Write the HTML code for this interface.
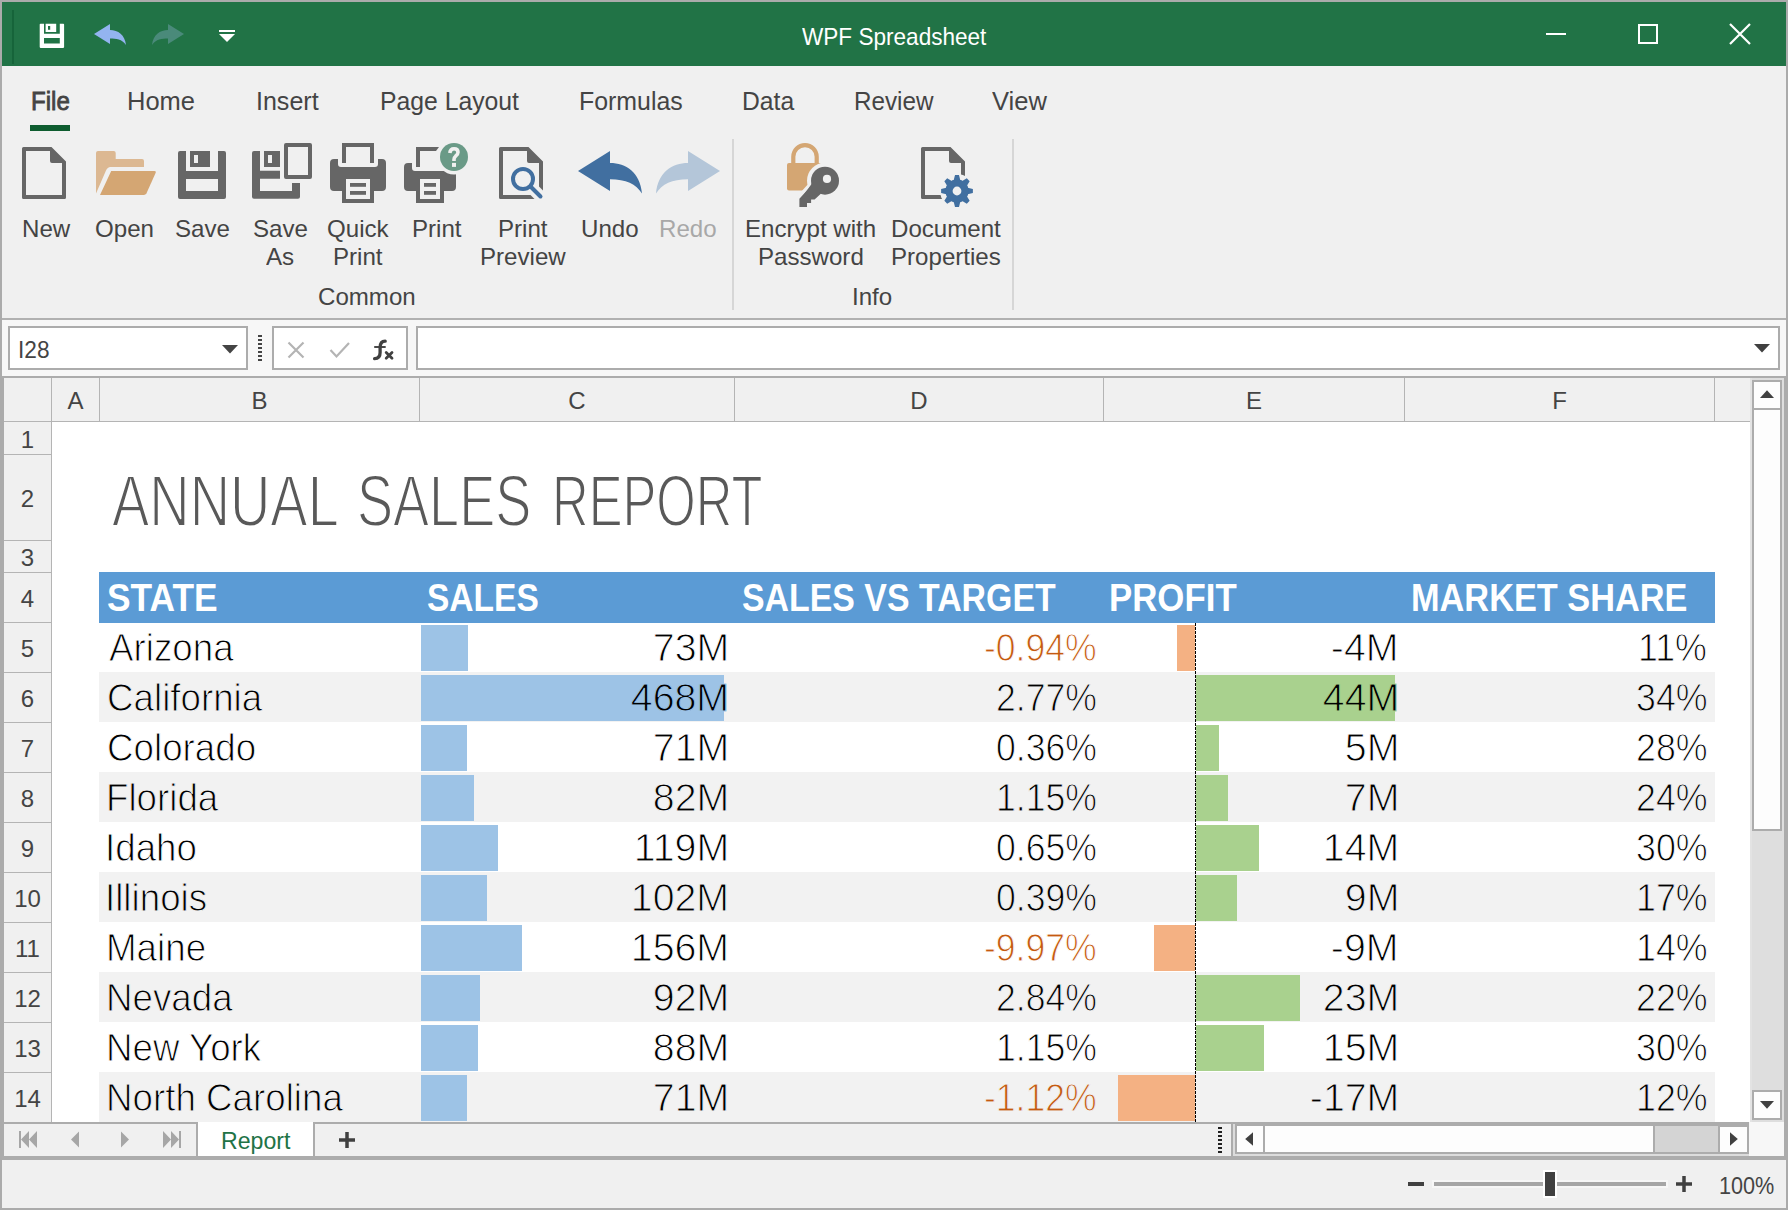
<!DOCTYPE html>
<html><head><meta charset="utf-8"><style>
*{margin:0;padding:0;box-sizing:border-box}
html,body{width:1788px;height:1210px;overflow:hidden}
body{position:relative;background:#ababab;font-family:"Liberation Sans",sans-serif;color:#444}
div,svg{position:absolute}
.t{white-space:nowrap;line-height:1}
</style></head><body>
<div style="left:2px;top:2px;width:1784px;height:64px;background:#217346"></div>
<div style="left:12px;top:10px;width:2px;height:54px;background:#16643a"></div>
<svg style="left:36px;top:20px" width="32" height="32" viewBox="36 20 32 32">
<path fill="#fff" fill-rule="evenodd" d="M40.5 23.8H44V33.7H59.8V23.8H63.3Q64.1 23.8 64.1 24.6V47.1Q64.1 47.9 63.3 47.9H40.5Q39.7 47.9 39.7 47.1V24.6Q39.7 23.8 40.5 23.8Z M44 38H59.8V43.6H44Z"/>
<path fill="#fff" fill-rule="evenodd" d="M45.6 23.8H56.2V32H45.6Z M48 26.1H50.2V29.8H48Z"/>
</svg>
<svg style="left:90px;top:20px" width="40" height="30" viewBox="0 0 40 30">
<path fill="#93b4f0" d="M4 14 L20 4 V10 C28 10 35 15 36 25 C32 19 26 18.5 20 18.5 V24 Z"/>
</svg>
<svg style="left:148px;top:20px" width="40" height="30" viewBox="0 0 40 30">
<path fill="#4a8a7a" d="M36 14 L20 4 V10 C12 10 5 15 4 25 C8 19 14 18.5 20 18.5 V24 Z"/>
</svg>
<div style="left:219px;top:30px;width:16px;height:2px;background:#fff"></div>
<svg style="left:219px;top:34px" width="16" height="9" viewBox="0 0 16 9"><path fill="#fff" d="M0 0H16L8 8Z"/></svg>
<div class="t" style="left:802.30px;top:25px;font-size:24.6px;color:#fff;transform-origin:0 0;transform:scaleX(0.9176);">WPF Spreadsheet</div>
<div style="left:1546px;top:33px;width:20px;height:2px;background:#fff"></div>
<div style="left:1638px;top:24px;width:20px;height:20px;border:2px solid #fff"></div>
<svg style="left:1728px;top:22px" width="24" height="24" viewBox="0 0 24 24"><path stroke="#fff" stroke-width="2.2" d="M2 2L22 22M22 2L2 22"/></svg>
<div style="left:2px;top:66px;width:1784px;height:252px;background:#f0f0f0"></div>
<div class="t" style="left:31.20px;top:89px;font-size:25.4px;color:#444;transform-origin:0 0;transform:scaleX(0.9481);-webkit-text-stroke:0.8px #444;">File</div>
<div class="t" style="left:127.00px;top:89px;font-size:25.4px;color:#444;transform-origin:0 0;transform:scaleX(1.0039);">Home</div>
<div class="t" style="left:256.20px;top:89px;font-size:25.4px;color:#444;transform-origin:0 0;transform:scaleX(0.9856);">Insert</div>
<div class="t" style="left:379.60px;top:89px;font-size:25.4px;color:#444;transform-origin:0 0;transform:scaleX(0.9748);">Page Layout</div>
<div class="t" style="left:579.30px;top:89px;font-size:25.4px;color:#444;transform-origin:0 0;transform:scaleX(0.9799);">Formulas</div>
<div class="t" style="left:741.70px;top:89px;font-size:25.4px;color:#444;transform-origin:0 0;transform:scaleX(0.9713);">Data</div>
<div class="t" style="left:854.10px;top:89px;font-size:25.4px;color:#444;transform-origin:0 0;transform:scaleX(0.9548);">Review</div>
<div class="t" style="left:992.30px;top:89px;font-size:25.4px;color:#444;transform-origin:0 0;transform:scaleX(1.0059);">View</div>
<div style="left:30px;top:125px;width:40px;height:5.6px;background:#0e5c2f"></div>
<div class="t" style="left:21.90px;top:218px;font-size:23.4px;color:#444;transform-origin:0 0;transform:scaleX(1.0300);">New</div>
<div class="t" style="left:94.52px;top:218px;font-size:23.4px;color:#444;transform-origin:0 0;transform:scaleX(1.0300);">Open</div>
<div class="t" style="left:174.54px;top:218px;font-size:23.4px;color:#444;transform-origin:0 0;transform:scaleX(1.0300);">Save</div>
<div class="t" style="left:252.54px;top:218px;font-size:23.4px;color:#444;transform-origin:0 0;transform:scaleX(1.0300);">Save</div>
<div class="t" style="left:265.94px;top:246px;font-size:23.4px;color:#444;transform-origin:0 0;transform:scaleX(1.0300);">As</div>
<div class="t" style="left:327.20px;top:218px;font-size:23.4px;color:#444;transform-origin:0 0;transform:scaleX(1.0300);">Quick</div>
<div class="t" style="left:333.22px;top:246px;font-size:23.4px;color:#444;transform-origin:0 0;transform:scaleX(1.0300);">Print</div>
<div class="t" style="left:412.22px;top:218px;font-size:23.4px;color:#444;transform-origin:0 0;transform:scaleX(1.0300);">Print</div>
<div class="t" style="left:498.22px;top:218px;font-size:23.4px;color:#444;transform-origin:0 0;transform:scaleX(1.0300);">Print</div>
<div class="t" style="left:480.15px;top:246px;font-size:23.4px;color:#444;transform-origin:0 0;transform:scaleX(1.0300);">Preview</div>
<div class="t" style="left:581.20px;top:218px;font-size:23.4px;color:#444;transform-origin:0 0;transform:scaleX(1.0300);">Undo</div>
<div class="t" style="left:659.20px;top:218px;font-size:23.4px;color:#a8a8a8;transform-origin:0 0;transform:scaleX(1.0300);">Redo</div>
<div class="t" style="left:745.39px;top:218px;font-size:23.4px;color:#444;transform-origin:0 0;transform:scaleX(1.0300);">Encrypt with</div>
<div class="t" style="left:758.11px;top:246px;font-size:23.4px;color:#444;transform-origin:0 0;transform:scaleX(1.0300);">Password</div>
<div class="t" style="left:890.60px;top:218px;font-size:23.4px;color:#444;transform-origin:0 0;transform:scaleX(1.0300);">Document</div>
<div class="t" style="left:890.60px;top:246px;font-size:23.4px;color:#444;transform-origin:0 0;transform:scaleX(1.0300);">Properties</div>
<div class="t" style="left:318.13px;top:286px;font-size:23.4px;color:#444;transform-origin:0 0;transform:scaleX(1.0300);">Common</div>
<div class="t" style="left:851.91px;top:286px;font-size:23.4px;color:#444;transform-origin:0 0;transform:scaleX(1.0300);">Info</div>
<div style="left:732px;top:139px;width:2px;height:171px;background:#d6d6d6"></div>
<div style="left:1012px;top:139px;width:2px;height:171px;background:#d6d6d6"></div>
<svg style="left:22px;top:147px" width="44" height="52" viewBox="0 0 44 52"><path fill="#666666" fill-rule="evenodd" d="M1.5 0H29.5L44 14.5V50.5Q44 52 42.5 52H1.5Q0 52 0 50.5V1.5Q0 0 1.5 0ZM4 4H28V14Q28 16 30 16H40V48H4Z"/></svg>
<svg style="left:96px;top:151px" width="61" height="45" viewBox="0 0 61 45"><path fill="#dcb892" d="M0 2Q0 0 2 0H17.7Q19.7 0 19.7 2V8H46Q48 8 48 10V16H14.5Q11.5 16 10 19.5L0 42.5Z"/><path fill="#d4a673" d="M15.2 20H58.5Q60.5 20 59.7 21.8L50.5 42.3Q49.6 44 47.8 44H4Z"/></svg>
<svg style="left:178px;top:151px" width="48" height="48" viewBox="0 0 48 48"><path fill="#666666" fill-rule="evenodd" d="M2 0H8V20H40V0H46Q48 0 48 2V46Q48 48 46 48H2Q0 48 0 46V2Q0 0 2 0Z M8 28H40V40H8Z"/><path fill="#666666" fill-rule="evenodd" d="M12 0H32V16H12Z M16 4H20V12H16Z"/></svg>
<svg style="left:252px;top:143px" width="61" height="57" viewBox="0 0 61 57"><path fill="#666666" fill-rule="evenodd" d="M2 8H8V27.8H28V35.8H8V48H40V40H48V53.8Q48 55.8 46 55.8H2Q0 55.8 0 53.8V10Q0 8 2 8Z"/><path fill="#666666" fill-rule="evenodd" d="M12 8H28V24H12Z M16 12H20V20H16Z"/><path fill="#666666" fill-rule="evenodd" d="M34 0H58Q60 0 60 2V34Q60 36 58 36H34Q32 36 32 34V2Q32 0 34 0Z M36 4V32H56V4Z"/></svg>
<svg style="left:330px;top:143px" width="56" height="60" viewBox="0 0 56 60"><path fill="#666666" d="M12 0H44V20H40V4H16V20H12Z"/><path fill="#666666" fill-rule="evenodd" d="M0 20Q0 16 4 16H8V21Q8 24 11 24H45Q48 24 48 21V16H52Q56 16 56 20V44Q56 48 52 48H44V60H12V48H4Q0 48 0 44Z M16 36V56H40V36Z"/><rect fill="#666666" x="20" y="40" width="16" height="3.8"/><rect fill="#666666" x="20" y="48" width="16" height="3.8"/></svg>
<svg style="left:404px;top:140px" width="66" height="64" viewBox="0 0 66 64"><g transform="translate(0,3)"><path fill="#666666" d="M12 4H35L32 8H16V24H12Z"/><path fill="#666666" fill-rule="evenodd" d="M0 24Q0 20 4 20H8V25Q8 28 11 28H52V44Q52 48 48 48H40V60H12V48H4Q0 48 0 44Z M16 36V56H36V36Z"/><rect fill="#666666" x="20" y="40" width="12" height="3.8"/><rect fill="#666666" x="20" y="48" width="12" height="3.8"/><circle cx="50" cy="14" r="17.5" fill="#f0f0f0"/><circle cx="50" cy="14" r="14" fill="#6a9a87"/><path fill="none" stroke="#f0f0f0" stroke-width="3.6" d="M45.8 10Q46.3 5.8 50 5.8Q54 5.8 54 9.3Q54 11.5 51.5 13.3Q50 14.5 50 16.5V17.9"/><rect fill="#f0f0f0" x="48" y="19.9" width="4" height="4"/></g></svg>
<svg style="left:499px;top:147px" width="46" height="54" viewBox="0 0 46 54"><path fill="#666666" fill-rule="evenodd" d="M1.5 0H29.5L44 14.5V50.5Q44 52 42.5 52H1.5Q0 52 0 50.5V1.5Q0 0 1.5 0ZM4 4H28V14Q28 16 30 16H40V48H4Z"/><circle cx="24" cy="32" r="10" fill="none" stroke="#f0f0f0" stroke-width="11"/><path stroke="#f0f0f0" stroke-width="12" d="M31 39L46 54"/><circle cx="24" cy="32" r="10" fill="none" stroke="#416fa0" stroke-width="4"/><path stroke="#416fa0" stroke-width="4" stroke-linecap="round" d="M31.5 39.5L41.5 49.5"/></svg>
<svg style="left:578px;top:150px" width="66" height="46" viewBox="0 0 66 46"><path fill="#416fa0" d="M0 21L32 1V13C48 13 62 22 64 43.5C58 34 48 29.2 32 29.2V41Z"/></svg>
<svg style="left:655px;top:150px" width="66" height="46" viewBox="0 0 66 46"><path fill="#b4c6d9" d="M65 21L33 1V13C17 13 3 22 1 43.5C7 34 17 29.2 33 29.2V41Z"/></svg>
<svg style="left:785px;top:141px" width="40" height="52" viewBox="0 0 40 52"><g transform="translate(2,2)"><path fill="none" stroke="#d4a673" stroke-width="4.2" d="M6.3 20V13.8A11.7 11.7 0 0 1 29.7 13.8V20"/><rect fill="#d4a673" x="0" y="20" width="34" height="27.6" rx="2"/></g></svg>
<svg style="left:780px;top:160px" width="60" height="52" viewBox="780 160 60 52"><circle cx="825" cy="180.7" r="18" fill="#f0f0f0"/><path fill="#f0f0f0" stroke="#f0f0f0" stroke-width="7" stroke-linejoin="round" d="M811.7 185.3L799.4 198.8V207.1H807V203H811.1V199.4H814.6L821.1 193.6Z"/><circle cx="825" cy="180.7" r="14" fill="#666666"/><path fill="#666666" d="M811.7 185.3L799.4 198.8V207.1H807V203H811.1V199.4H814.6L821.1 193.6Z"/><path fill="#666666" d="M813 182L822 191L800 200Z"/><circle cx="827" cy="178.9" r="4.1" fill="#f0f0f0"/></svg>
<svg style="left:921px;top:147px" width="56" height="62" viewBox="0 0 56 62"><path fill="#666666" fill-rule="evenodd" d="M1.5 0H29.5L44 14.5V50.5Q44 52 42.5 52H1.5Q0 52 0 50.5V1.5Q0 0 1.5 0ZM4 4H28V14Q28 16 30 16H40V48H4Z"/><circle cx="36" cy="44" r="17" fill="#f0f0f0"/><path fill="#416fa0" d="M32.69 33.30 L34.01 28.12 L37.99 28.12 L39.31 33.30 L41.23 34.09 L45.81 31.36 L48.64 34.19 L45.91 38.77 L46.70 40.69 L51.88 42.01 L51.88 45.99 L46.70 47.31 L45.91 49.23 L48.64 53.81 L45.81 56.64 L41.23 53.91 L39.31 54.70 L37.99 59.88 L34.01 59.88 L32.69 54.70 L30.77 53.91 L26.19 56.64 L23.36 53.81 L26.09 49.23 L25.30 47.31 L20.12 45.99 L20.12 42.01 L25.30 40.69 L26.09 38.77 L23.36 34.19 L26.19 31.36 L30.77 34.09Z"/><circle cx="36" cy="44" r="11.6" fill="#416fa0"/><circle cx="36" cy="44" r="4.4" fill="#f0f0f0"/></svg>
<div style="left:2px;top:318px;width:1784px;height:2px;background:#b1b1b1"></div>
<div style="left:2px;top:320px;width:1784px;height:56px;background:#f7f7f7"></div>
<div style="left:8px;top:326px;width:240px;height:44px;background:#fff;border:2px solid #acacac"></div>
<div class="t" style="left:18.00px;top:338px;font-size:24px;color:#444;transform-origin:0 0;transform:scaleX(0.9438);">I28</div>
<svg style="left:222px;top:345px" width="16" height="9" viewBox="0 0 16 9"><path fill="#444" d="M0 0H16L8 8.5Z"/></svg>
<div style="left:258px;top:335px;width:4px;height:2.2px;background:#444"></div>
<div style="left:258px;top:339px;width:4px;height:2.2px;background:#444"></div>
<div style="left:258px;top:343px;width:4px;height:2.2px;background:#444"></div>
<div style="left:258px;top:347px;width:4px;height:2.2px;background:#444"></div>
<div style="left:258px;top:351px;width:4px;height:2.2px;background:#444"></div>
<div style="left:258px;top:355px;width:4px;height:2.2px;background:#444"></div>
<div style="left:258px;top:359px;width:4px;height:2.2px;background:#444"></div>
<div style="left:272px;top:326px;width:136px;height:44px;background:#fff;border:2px solid #acacac"></div>
<svg style="left:286px;top:340px" width="20" height="20" viewBox="0 0 20 20"><path stroke="#b4b4b4" stroke-width="2.2" d="M2.5 2.5L17.5 17.5M17.5 2.5L2.5 17.5"/></svg>
<svg style="left:328px;top:340px" width="24" height="20" viewBox="0 0 24 20"><path stroke="#b4b4b4" stroke-width="2.2" fill="none" d="M2.5 10L8.5 16.5L21 3"/></svg>
<svg style="left:366px;top:334px" width="36" height="32" viewBox="366 334 36 32">
<path fill="none" stroke="#404040" stroke-width="3.3" stroke-linecap="round" d="M385.2 341.2C381.2 341.3 380.1 343.5 380.1 347.5V352.5C380.1 356.8 378.2 358.6 374.6 358.7"/>
<path stroke="#404040" stroke-width="1.9" d="M374.2 347H385.7"/>
<path stroke="#404040" stroke-width="2.8" stroke-linecap="round" d="M386.2 352.4L392 358.2M392 352.4L386.2 358.2"/>
</svg>
<div style="left:416px;top:326px;width:1364px;height:44px;background:#fff;border:2px solid #acacac"></div>
<svg style="left:1754px;top:344px" width="17" height="10" viewBox="0 0 17 10"><path fill="#404040" d="M0 0H16L8 8.6Z"/></svg>
<div style="left:2px;top:376px;width:1784px;height:2px;background:#acacac"></div>
<div style="left:4px;top:378px;width:1746px;height:744px;background:#fff"></div>
<div style="left:4px;top:378px;width:1746px;height:43px;background:#f0f0f0"></div>
<div style="left:4px;top:421px;width:1746px;height:1px;background:#b4b4b4"></div>
<div style="left:51px;top:378px;width:1px;height:43px;background:#b4b4b4"></div>
<div style="left:99px;top:378px;width:1px;height:43px;background:#b4b4b4"></div>
<div style="left:419px;top:378px;width:1px;height:43px;background:#b4b4b4"></div>
<div style="left:734px;top:378px;width:1px;height:43px;background:#b4b4b4"></div>
<div style="left:1103px;top:378px;width:1px;height:43px;background:#b4b4b4"></div>
<div style="left:1404px;top:378px;width:1px;height:43px;background:#b4b4b4"></div>
<div style="left:1714px;top:378px;width:1px;height:43px;background:#b4b4b4"></div>
<div class="t" style="left:67.49px;top:389px;font-size:24px;color:#444;">A</div>
<div class="t" style="left:251.49px;top:389px;font-size:24px;color:#444;">B</div>
<div class="t" style="left:568.33px;top:389px;font-size:24px;color:#444;">C</div>
<div class="t" style="left:910.33px;top:389px;font-size:24px;color:#444;">D</div>
<div class="t" style="left:1245.99px;top:389px;font-size:24px;color:#444;">E</div>
<div class="t" style="left:1552.16px;top:389px;font-size:24px;color:#444;">F</div>
<div style="left:4px;top:422px;width:47px;height:700px;background:#f0f0f0"></div>
<div style="left:51px;top:422px;width:1px;height:700px;background:#b4b4b4"></div>
<div style="left:4px;top:454px;width:47px;height:1px;background:#b4b4b4"></div>
<div class="t" style="left:20.82px;top:428px;font-size:24px;color:#444;">1</div>
<div style="left:4px;top:540px;width:47px;height:1px;background:#b4b4b4"></div>
<div class="t" style="left:20.82px;top:487px;font-size:24px;color:#444;">2</div>
<div style="left:4px;top:572px;width:47px;height:1px;background:#b4b4b4"></div>
<div class="t" style="left:20.82px;top:546px;font-size:24px;color:#444;">3</div>
<div style="left:4px;top:622px;width:47px;height:1px;background:#b4b4b4"></div>
<div class="t" style="left:20.82px;top:587px;font-size:24px;color:#444;">4</div>
<div style="left:4px;top:672px;width:47px;height:1px;background:#b4b4b4"></div>
<div class="t" style="left:20.82px;top:637px;font-size:24px;color:#444;">5</div>
<div style="left:4px;top:722px;width:47px;height:1px;background:#b4b4b4"></div>
<div class="t" style="left:20.82px;top:687px;font-size:24px;color:#444;">6</div>
<div style="left:4px;top:772px;width:47px;height:1px;background:#b4b4b4"></div>
<div class="t" style="left:20.82px;top:737px;font-size:24px;color:#444;">7</div>
<div style="left:4px;top:822px;width:47px;height:1px;background:#b4b4b4"></div>
<div class="t" style="left:20.82px;top:787px;font-size:24px;color:#444;">8</div>
<div style="left:4px;top:872px;width:47px;height:1px;background:#b4b4b4"></div>
<div class="t" style="left:20.82px;top:837px;font-size:24px;color:#444;">9</div>
<div style="left:4px;top:922px;width:47px;height:1px;background:#b4b4b4"></div>
<div class="t" style="left:14.15px;top:887px;font-size:24px;color:#444;">10</div>
<div style="left:4px;top:972px;width:47px;height:1px;background:#b4b4b4"></div>
<div class="t" style="left:15.04px;top:937px;font-size:24px;color:#444;">11</div>
<div style="left:4px;top:1022px;width:47px;height:1px;background:#b4b4b4"></div>
<div class="t" style="left:14.15px;top:987px;font-size:24px;color:#444;">12</div>
<div style="left:4px;top:1072px;width:47px;height:1px;background:#b4b4b4"></div>
<div class="t" style="left:14.15px;top:1037px;font-size:24px;color:#444;">13</div>
<div style="left:4px;top:1122px;width:47px;height:1px;background:#b4b4b4"></div>
<div class="t" style="left:14.15px;top:1087px;font-size:24px;color:#444;">14</div>
<div class="t" style="left:112.10px;top:465px;font-size:72px;color:#595959;transform-origin:0 0;transform:scaleX(0.7762);-webkit-text-stroke:1.8px #fff;">ANNUAL</div>
<div class="t" style="left:356.55px;top:465px;font-size:72px;color:#595959;transform-origin:0 0;transform:scaleX(0.7509);-webkit-text-stroke:1.8px #fff;">SALES</div>
<div class="t" style="left:552.27px;top:465px;font-size:72px;color:#595959;transform-origin:0 0;transform:scaleX(0.7048);-webkit-text-stroke:1.8px #fff;">REPORT</div>
<div style="left:99px;top:572px;width:1616px;height:51px;background:#5b9bd5"></div>
<div class="t" style="left:107.09px;top:578px;font-size:39px;color:#fff;font-weight:bold;transform-origin:0 0;transform:scaleX(0.9067);">STATE</div>
<div class="t" style="left:427.14px;top:578px;font-size:39px;color:#fff;font-weight:bold;transform-origin:0 0;transform:scaleX(0.8594);">SALES</div>
<div class="t" style="left:742.43px;top:578px;font-size:39px;color:#fff;font-weight:bold;transform-origin:0 0;transform:scaleX(0.8686);">SALES VS TARGET</div>
<div class="t" style="left:1109.32px;top:578px;font-size:39px;color:#fff;font-weight:bold;transform-origin:0 0;transform:scaleX(0.8929);">PROFIT</div>
<div class="t" style="left:1411.16px;top:578px;font-size:39px;color:#fff;font-weight:bold;transform-origin:0 0;transform:scaleX(0.8797);">MARKET SHARE</div>
<div style="left:421px;top:625px;width:47px;height:46px;background:#9dc3e6"></div>
<div style="left:1177px;top:625px;width:18px;height:46px;background:#f4b183"></div>
<div class="t" style="left:109.00px;top:628px;font-size:39.3px;color:#000;transform-origin:0 0;transform:scaleX(0.9350);-webkit-text-stroke:1px #fff;">Arizona</div>
<div class="t" style="left:652.80px;top:628px;font-size:39.3px;color:#000;-webkit-text-stroke:1px #fff;">73M</div>
<div class="t" style="left:984.18px;top:628px;font-size:39.3px;color:#c55a11;transform-origin:0 0;transform:scaleX(0.9050);-webkit-text-stroke:1px #fff;">-0.94%</div>
<div class="t" style="left:1330.80px;top:628px;font-size:39.3px;color:#000;-webkit-text-stroke:1px #fff;">-4M</div>
<div class="t" style="left:1638.25px;top:628px;font-size:39.3px;color:#000;transform-origin:0 0;transform:scaleX(0.9100);-webkit-text-stroke:1px #fff;">11%</div>
<div style="left:99px;top:672px;width:1616px;height:50px;background:#f2f2f2"></div>
<div style="left:421px;top:675px;width:303px;height:46px;background:#9dc3e6"></div>
<div style="left:1196px;top:675px;width:199px;height:46px;background:#a9d18e"></div>
<div class="t" style="left:107.13px;top:678px;font-size:39.3px;color:#000;transform-origin:0 0;transform:scaleX(0.9350);-webkit-text-stroke:1px #f2f2f2;">California</div>
<div class="t" style="left:630.80px;top:678px;font-size:39.3px;color:#000;-webkit-text-stroke:1px #9dc3e6;">468M</div>
<div class="t" style="left:995.95px;top:678px;font-size:39.3px;color:#000;transform-origin:0 0;transform:scaleX(0.9050);-webkit-text-stroke:1px #f2f2f2;">2.77%</div>
<div class="t" style="left:1322.80px;top:678px;font-size:39.3px;color:#000;-webkit-text-stroke:1px #a9d18e;">44M</div>
<div class="t" style="left:1635.52px;top:678px;font-size:39.3px;color:#000;transform-origin:0 0;transform:scaleX(0.9100);-webkit-text-stroke:1px #f2f2f2;">34%</div>
<div style="left:421px;top:725px;width:46px;height:46px;background:#9dc3e6"></div>
<div style="left:1196px;top:725px;width:23px;height:46px;background:#a9d18e"></div>
<div class="t" style="left:107.13px;top:728px;font-size:39.3px;color:#000;transform-origin:0 0;transform:scaleX(0.9350);-webkit-text-stroke:1px #fff;">Colorado</div>
<div class="t" style="left:652.80px;top:728px;font-size:39.3px;color:#000;-webkit-text-stroke:1px #fff;">71M</div>
<div class="t" style="left:995.95px;top:728px;font-size:39.3px;color:#000;transform-origin:0 0;transform:scaleX(0.9050);-webkit-text-stroke:1px #fff;">0.36%</div>
<div class="t" style="left:1344.80px;top:728px;font-size:39.3px;color:#000;-webkit-text-stroke:1px #fff;">5M</div>
<div class="t" style="left:1635.52px;top:728px;font-size:39.3px;color:#000;transform-origin:0 0;transform:scaleX(0.9100);-webkit-text-stroke:1px #fff;">28%</div>
<div style="left:99px;top:772px;width:1616px;height:50px;background:#f2f2f2"></div>
<div style="left:421px;top:775px;width:53px;height:46px;background:#9dc3e6"></div>
<div style="left:1196px;top:775px;width:32px;height:46px;background:#a9d18e"></div>
<div class="t" style="left:106.19px;top:778px;font-size:39.3px;color:#000;transform-origin:0 0;transform:scaleX(0.9350);-webkit-text-stroke:1px #f2f2f2;">Florida</div>
<div class="t" style="left:652.80px;top:778px;font-size:39.3px;color:#000;-webkit-text-stroke:1px #f2f2f2;">82M</div>
<div class="t" style="left:995.95px;top:778px;font-size:39.3px;color:#000;transform-origin:0 0;transform:scaleX(0.9050);-webkit-text-stroke:1px #f2f2f2;">1.15%</div>
<div class="t" style="left:1344.80px;top:778px;font-size:39.3px;color:#000;-webkit-text-stroke:1px #f2f2f2;">7M</div>
<div class="t" style="left:1635.52px;top:778px;font-size:39.3px;color:#000;transform-origin:0 0;transform:scaleX(0.9100);-webkit-text-stroke:1px #f2f2f2;">24%</div>
<div style="left:421px;top:825px;width:77px;height:46px;background:#9dc3e6"></div>
<div style="left:1196px;top:825px;width:63px;height:46px;background:#a9d18e"></div>
<div class="t" style="left:105.26px;top:828px;font-size:39.3px;color:#000;transform-origin:0 0;transform:scaleX(0.9350);-webkit-text-stroke:1px #fff;">Idaho</div>
<div class="t" style="left:633.80px;top:828px;font-size:39.3px;color:#000;-webkit-text-stroke:1px #fff;">119M</div>
<div class="t" style="left:995.95px;top:828px;font-size:39.3px;color:#000;transform-origin:0 0;transform:scaleX(0.9050);-webkit-text-stroke:1px #fff;">0.65%</div>
<div class="t" style="left:1322.80px;top:828px;font-size:39.3px;color:#000;-webkit-text-stroke:1px #fff;">14M</div>
<div class="t" style="left:1635.52px;top:828px;font-size:39.3px;color:#000;transform-origin:0 0;transform:scaleX(0.9100);-webkit-text-stroke:1px #fff;">30%</div>
<div style="left:99px;top:872px;width:1616px;height:50px;background:#f2f2f2"></div>
<div style="left:421px;top:875px;width:66px;height:46px;background:#9dc3e6"></div>
<div style="left:1196px;top:875px;width:41px;height:46px;background:#a9d18e"></div>
<div class="t" style="left:105.26px;top:878px;font-size:39.3px;color:#000;transform-origin:0 0;transform:scaleX(0.9350);-webkit-text-stroke:1px #f2f2f2;">Illinois</div>
<div class="t" style="left:630.80px;top:878px;font-size:39.3px;color:#000;-webkit-text-stroke:1px #f2f2f2;">102M</div>
<div class="t" style="left:995.95px;top:878px;font-size:39.3px;color:#000;transform-origin:0 0;transform:scaleX(0.9050);-webkit-text-stroke:1px #f2f2f2;">0.39%</div>
<div class="t" style="left:1344.80px;top:878px;font-size:39.3px;color:#000;-webkit-text-stroke:1px #f2f2f2;">9M</div>
<div class="t" style="left:1635.52px;top:878px;font-size:39.3px;color:#000;transform-origin:0 0;transform:scaleX(0.9100);-webkit-text-stroke:1px #f2f2f2;">17%</div>
<div style="left:421px;top:925px;width:101px;height:46px;background:#9dc3e6"></div>
<div style="left:1154px;top:925px;width:41px;height:46px;background:#f4b183"></div>
<div class="t" style="left:106.19px;top:928px;font-size:39.3px;color:#000;transform-origin:0 0;transform:scaleX(0.9350);-webkit-text-stroke:1px #fff;">Maine</div>
<div class="t" style="left:630.80px;top:928px;font-size:39.3px;color:#000;-webkit-text-stroke:1px #fff;">156M</div>
<div class="t" style="left:984.18px;top:928px;font-size:39.3px;color:#c55a11;transform-origin:0 0;transform:scaleX(0.9050);-webkit-text-stroke:1px #fff;">-9.97%</div>
<div class="t" style="left:1330.80px;top:928px;font-size:39.3px;color:#000;-webkit-text-stroke:1px #fff;">-9M</div>
<div class="t" style="left:1635.52px;top:928px;font-size:39.3px;color:#000;transform-origin:0 0;transform:scaleX(0.9100);-webkit-text-stroke:1px #fff;">14%</div>
<div style="left:99px;top:972px;width:1616px;height:50px;background:#f2f2f2"></div>
<div style="left:421px;top:975px;width:59px;height:46px;background:#9dc3e6"></div>
<div style="left:1196px;top:975px;width:104px;height:46px;background:#a9d18e"></div>
<div class="t" style="left:106.19px;top:978px;font-size:39.3px;color:#000;transform-origin:0 0;transform:scaleX(0.9350);-webkit-text-stroke:1px #f2f2f2;">Nevada</div>
<div class="t" style="left:652.80px;top:978px;font-size:39.3px;color:#000;-webkit-text-stroke:1px #f2f2f2;">92M</div>
<div class="t" style="left:995.95px;top:978px;font-size:39.3px;color:#000;transform-origin:0 0;transform:scaleX(0.9050);-webkit-text-stroke:1px #f2f2f2;">2.84%</div>
<div class="t" style="left:1322.80px;top:978px;font-size:39.3px;color:#000;-webkit-text-stroke:1px #f2f2f2;">23M</div>
<div class="t" style="left:1635.52px;top:978px;font-size:39.3px;color:#000;transform-origin:0 0;transform:scaleX(0.9100);-webkit-text-stroke:1px #f2f2f2;">22%</div>
<div style="left:421px;top:1025px;width:57px;height:46px;background:#9dc3e6"></div>
<div style="left:1196px;top:1025px;width:68px;height:46px;background:#a9d18e"></div>
<div class="t" style="left:106.19px;top:1028px;font-size:39.3px;color:#000;transform-origin:0 0;transform:scaleX(0.9350);-webkit-text-stroke:1px #fff;">New York</div>
<div class="t" style="left:652.80px;top:1028px;font-size:39.3px;color:#000;-webkit-text-stroke:1px #fff;">88M</div>
<div class="t" style="left:995.95px;top:1028px;font-size:39.3px;color:#000;transform-origin:0 0;transform:scaleX(0.9050);-webkit-text-stroke:1px #fff;">1.15%</div>
<div class="t" style="left:1322.80px;top:1028px;font-size:39.3px;color:#000;-webkit-text-stroke:1px #fff;">15M</div>
<div class="t" style="left:1635.52px;top:1028px;font-size:39.3px;color:#000;transform-origin:0 0;transform:scaleX(0.9100);-webkit-text-stroke:1px #fff;">30%</div>
<div style="left:99px;top:1072px;width:1616px;height:50px;background:#f2f2f2"></div>
<div style="left:421px;top:1075px;width:46px;height:46px;background:#9dc3e6"></div>
<div style="left:1118px;top:1075px;width:77px;height:46px;background:#f4b183"></div>
<div class="t" style="left:106.19px;top:1078px;font-size:39.3px;color:#000;transform-origin:0 0;transform:scaleX(0.9350);-webkit-text-stroke:1px #f2f2f2;">North Carolina</div>
<div class="t" style="left:652.80px;top:1078px;font-size:39.3px;color:#000;-webkit-text-stroke:1px #f2f2f2;">71M</div>
<div class="t" style="left:984.18px;top:1078px;font-size:39.3px;color:#c55a11;transform-origin:0 0;transform:scaleX(0.9050);-webkit-text-stroke:1px #f2f2f2;">-1.12%</div>
<div class="t" style="left:1309.80px;top:1078px;font-size:39.3px;color:#000;-webkit-text-stroke:1px #f2f2f2;">-17M</div>
<div class="t" style="left:1635.52px;top:1078px;font-size:39.3px;color:#000;transform-origin:0 0;transform:scaleX(0.9100);-webkit-text-stroke:1px #f2f2f2;">12%</div>
<div style="left:1195px;top:623px;width:1px;height:499px;background:repeating-linear-gradient(#000 0 3px,transparent 3px 4px)"></div>
<div style="left:1750px;top:378px;width:34px;height:744px;background:#dedede"></div>
<div style="left:1750px;top:378px;width:2px;height:744px;background:#e3e3e3"></div>
<div style="left:1752px;top:380px;width:30px;height:30px;background:#fdfdfd;border:2px solid #acacac"></div>
<svg style="left:1759px;top:389px" width="16" height="10" viewBox="0 0 16 10"><path fill="#404040" d="M1 9H15L8 1.2Z"/></svg>
<div style="left:1752px;top:408px;width:30px;height:423px;background:#fdfdfd;border:2px solid #acacac"></div>
<div style="left:1752px;top:1090px;width:30px;height:30px;background:#fdfdfd;border:2px solid #acacac"></div>
<svg style="left:1759px;top:1100px" width="16" height="10" viewBox="0 0 16 10"><path fill="#404040" d="M1 1H15L8 8.8Z"/></svg>
<div style="left:1784px;top:376px;width:4px;height:784px;background:#acacac"></div>
<div style="left:2px;top:1122px;width:1784px;height:2px;background:#acacac"></div>
<div style="left:4px;top:1124px;width:1780px;height:32px;background:#f0f0f0"></div>
<div style="left:196px;top:1124px;width:2px;height:32px;background:#acacac"></div>
<div style="left:198px;top:1122px;width:115px;height:34px;background:#fff"></div>
<div style="left:313px;top:1124px;width:2px;height:32px;background:#acacac"></div>
<div class="t" style="left:221.00px;top:1129px;font-size:24px;color:#217346;transform-origin:0 0;transform:scaleX(0.9633);">Report</div>
<svg style="left:18px;top:1130px" width="166" height="20" viewBox="0 0 166 20">
<g fill="#a6a6a6">
<rect x="1" y="1" width="2" height="17"/><path d="M3 9.5L11 1V18Z M11 9.5L19 1V18Z"/>
<path d="M53 9.5L61 1.5V17.5Z"/>
<path d="M103 1.5L111 9.5L103 17.5Z"/>
<path d="M145 1L153 9.5L145 18Z M153 1L161 9.5L153 18Z"/><rect x="161" y="1" width="2" height="17"/>
</g></svg>
<svg style="left:338px;top:1131px" width="18" height="18" viewBox="0 0 18 18"><path stroke="#404040" stroke-width="3.5" d="M1 9H17M9 1V17"/></svg>
<div style="left:1218px;top:1127px;width:4px;height:2px;background:#222"></div>
<div style="left:1218px;top:1131px;width:4px;height:2px;background:#222"></div>
<div style="left:1218px;top:1135px;width:4px;height:2px;background:#222"></div>
<div style="left:1218px;top:1139px;width:4px;height:2px;background:#222"></div>
<div style="left:1218px;top:1143px;width:4px;height:2px;background:#222"></div>
<div style="left:1218px;top:1147px;width:4px;height:2px;background:#222"></div>
<div style="left:1218px;top:1151px;width:4px;height:2px;background:#222"></div>
<div style="left:1231px;top:1124px;width:2px;height:32px;background:#acacac"></div>
<div style="left:1233px;top:1124px;width:2px;height:32px;background:#dcdcdc"></div>
<div style="left:1233px;top:1154px;width:516px;height:2px;background:#dcdcdc"></div>
<div style="left:1235px;top:1124px;width:514px;height:30px;background:#acacac"></div>
<div style="left:1237px;top:1126px;width:26px;height:26px;background:#fdfdfd"></div>
<svg style="left:1244px;top:1131px" width="10" height="16" viewBox="0 0 10 16"><path fill="#404040" d="M9 1.2V14.8L1.2 8Z"/></svg>
<div style="left:1265px;top:1126px;width:388px;height:26px;background:#fdfdfd"></div>
<div style="left:1655px;top:1126px;width:63px;height:26px;background:#d4d4d4"></div>
<div style="left:1718px;top:1125px;width:31px;height:29px;background:#fdfdfd;border:2px solid #acacac"></div>
<svg style="left:1729px;top:1131px" width="10" height="16" viewBox="0 0 10 16"><path fill="#404040" d="M1 1.2V14.8L8.8 8Z"/></svg>
<div style="left:1749px;top:1122px;width:35px;height:34px;background:#f7f7f7"></div>
<div style="left:2px;top:1156px;width:1784px;height:4px;background:#acacac"></div>
<div style="left:2px;top:1160px;width:1784px;height:48px;background:#f0f0f0"></div>
<div style="left:1408px;top:1182px;width:16px;height:4px;background:#404040"></div>
<div style="left:1432px;top:1180px;width:236px;height:8px;background:#f7f7f7"></div>
<div style="left:1434px;top:1182px;width:232px;height:4px;background:#a6a6a6"></div>
<div style="left:1543px;top:1170px;width:14px;height:28px;background:#fff"></div>
<div style="left:1545px;top:1172px;width:10px;height:24px;background:#404040"></div>
<svg style="left:1676px;top:1176px" width="16" height="16" viewBox="0 0 16 16"><path stroke="#404040" stroke-width="3.5" d="M0 8H16M8 0V16"/></svg>
<div class="t" style="left:1719.00px;top:1175px;font-size:23px;color:#444;transform-origin:0 0;transform:scaleX(0.9400);">100%</div>
</body></html>
